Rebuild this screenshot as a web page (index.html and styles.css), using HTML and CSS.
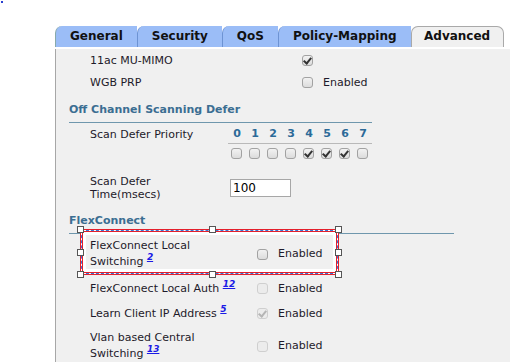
FILE: index.html
```html
<!DOCTYPE html>
<html>
<head>
    <title>WLAN Advanced</title>
    <link rel="stylesheet" href="styles.css">
</head>
<body>
    <div class="mark"></div>
    <div class="panel">
        <ul class="tabs">
            <li>General</li>
            <li>Security</li>
            <li>QoS</li>
            <li>Policy-Mapping</li>
            <li class="active">Advanced</li>
        </ul>
        <div class="content">
            <div class="row row-top">
                <div class="label">11ac MU-MIMO</div>
                <div class="value"><span class="cb checked"></span></div>
            </div>
            <div class="row row-top">
                <div class="label">WGB PRP</div>
                <div class="value"><span class="cb"></span><span class="txt">Enabled</span></div>
            </div>

            <h3 class="heading short">Off Channel Scanning Defer</h3>
            <div class="row row-prio">
                <div class="label">Scan Defer Priority</div>
                <div class="prio">
                    <div class="nums">
                        <span>0</span><span>1</span><span>2</span><span>3</span>
                        <span>4</span><span>5</span><span>6</span><span>7</span>
                    </div>
                    <div class="boxes">
                        <span><i class="cb"></i></span><span><i class="cb"></i></span>
                        <span><i class="cb"></i></span><span><i class="cb"></i></span>
                        <span><i class="cb checked"></i></span><span><i class="cb checked"></i></span>
                        <span><i class="cb checked"></i></span><span><i class="cb"></i></span>
                    </div>
                </div>
            </div>
            <div class="row row-time">
                <div class="label">Scan Defer<br>Time(msecs)</div>
                <div class="value"><input class="field" type="text" value="100"></div>
            </div>

            <h3 class="heading long">FlexConnect</h3>
            <div class="row row-fc row-sel">
                <div class="label">FlexConnect Local<br>Switching <a href="#">2</a></div>
                <div class="value"><span class="cb"></span><span class="txt">Enabled</span></div>
                <div class="sel">
                    <i class="h tl"></i><i class="h tm"></i><i class="h tr"></i>
                    <i class="h ml"></i><i class="h mr"></i>
                    <i class="h bl"></i><i class="h bm"></i><i class="h br"></i>
                </div>
            </div>
            <div class="row row-fc row-one">
                <div class="label">FlexConnect Local Auth <a href="#">12</a></div>
                <div class="value"><span class="cb off"></span><span class="txt">Enabled</span></div>
            </div>
            <div class="row row-fc row-one">
                <div class="label">Learn Client IP Address <a href="#">5</a></div>
                <div class="value"><span class="cb off checked"></span><span class="txt">Enabled</span></div>
            </div>
            <div class="row row-fc row-two">
                <div class="label">Vlan based Central<br>Switching <a href="#">13</a></div>
                <div class="value"><span class="cb off"></span><span class="txt">Enabled</span></div>
            </div>
        </div>
    </div>
</body>
</html>
```

FILE: styles.css
```css
body {
    margin: 0;
    background: #fff;
    font-family: "DejaVu Sans", Verdana, sans-serif;
    font-size: 11px;
    color: #1e1a2a;
    height: 362px;
    overflow: hidden;
}

.mark {
    width: 2px;
    height: 2px;
    margin: 1px 0 0 1px;
    background: #2a3fd0;
}

.panel {
    margin: 23px 0 0 55px;
    width: 455px;
}

/* Вкладки */
.tabs {
    display: flex;
    list-style: none;
    margin: 0;
    padding: 0;
    height: 21px;
}

.tabs li {
    flex-shrink: 0;
    white-space: nowrap;
    height: 21px;
    line-height: 21px;
    padding: 0 14px;
    font-size: 12px;
    font-weight: bold;
    color: #111;
    background: #9bbdf7;
    border-left: 1px solid #6d93d3;
    border-top-left-radius: 7px;
    box-sizing: border-box;
}

.tabs li:first-child {
    border-left: 1px solid #8aa;
}

.tabs li.active {
    width: 93px;
    padding: 0;
    text-align: center;
    background: #f0f0f0;
    border: 1px solid #a9a9a9;
    border-bottom: none;
    border-top-right-radius: 7px;
    line-height: 19px;
}

.content {
    background: #f0f0f0;
    border-left: 1px solid #a7a7a7;
    height: 320px;
}

.row {
    display: grid;
    padding-left: 34px;
    align-items: center;
}

.row-top {
    grid-template-columns: 212px auto;
    height: 22px;
}

.row-top:first-child {
    margin-top: 2px;
}

.value {
    display: flex;
    align-items: center;
}

.txt {
    margin-left: 10px;
}

.heading {
    margin: 5px 0 0 13px;
    padding: 5px 0 6px;
    font-size: 11px;
    line-height: 13px;
    font-weight: bold;
    color: #3b6e92;
    border-bottom: 1px solid #6f97ad;
}

.heading.short {
    width: 303px;
}

.heading.long {
    width: 385px;
    margin-top: 8px;
}

/* Чекбоксы */
.cb {
    display: inline-block;
    width: 9px;
    height: 9px;
    border: 1px solid #a2a2a2;
    border-radius: 3px;
    background: linear-gradient(#f2f2f2, #dcdcdc);
    position: relative;
}

.cb.checked::after {
    content: "";
    position: absolute;
    left: 2px;
    top: 0;
    width: 3px;
    height: 6px;
    border: solid #333;
    border-width: 0 2px 2px 0;
    transform: rotate(40deg);
}

.cb.off {
    border-color: #cfcfcf;
    background: #ececec;
}

.cb.off.checked::after {
    border-color: #b5b5b5;
}

.row-prio {
    grid-template-columns: 138px auto;
    align-items: start;
    margin-top: 2px;
}

.row-prio .label {
    line-height: 20px;
}

.nums, .boxes {
    display: flex;
}

.nums {
    width: 144px;
    border-bottom: 1px solid #b9b9b9;
}

.nums span, .boxes span {
    width: 18px;
    text-align: center;
}

.nums span {
    font-weight: bold;
    color: #2c6a98;
    line-height: 18px;
    font-size: 11px;
}

.boxes {
    padding-top: 4px;
    height: 11px;
}

.boxes span {
    text-align: left;
    padding-left: 3px;
    box-sizing: border-box;
}

.row-time {
    grid-template-columns: 140px auto;
    margin-top: 16px;
    line-height: 13px;
}

.field {
    width: 61px;
    height: 18px;
    box-sizing: border-box;
    border: 1px solid #a7a7a7;
    font-family: inherit;
    font-size: 12px;
    padding: 0 2px;
    margin: 0;
}

.row-fc {
    grid-template-columns: 167px auto;
    line-height: 16px;
}

.row-fc a {
    color: #1a1ae6;
    font-size: 9px;
    font-weight: bold;
    font-style: italic;
    vertical-align: 5px;
    line-height: 0;
}

.row-sel {
    position: relative;
    height: 36px;
    margin: 2px 0 4px;
}

.row-one {
    height: 25px;
}

.row-two {
    height: 40px;
}

/* Рамка выделения */
.sel {
    position: absolute;
    left: 24px;
    top: -7px;
    width: 253px;
    height: 40px;
    border: 3px solid #e41f2b;
    box-shadow: inset 0 0 0 3px #fff;
}

.sel::before {
    content: "";
    position: absolute;
    inset: -2px;
    border: 1px solid #fff;
}

.sel::after {
    content: "";
    position: absolute;
    inset: -2px;
    border: 1px dashed #3a76d6;
}

.h {
    position: absolute;
    width: 5px;
    height: 5px;
    background: #fff;
    border: 1px solid #555;
    z-index: 2;
}

.h.tl, .h.ml, .h.bl { left: -6px; }
.h.tr, .h.mr, .h.br { right: -6px; }
.h.tm, .h.bm { left: 126px; }
.h.tl, .h.tm, .h.tr { top: -6px; }
.h.bl, .h.bm, .h.br { bottom: -6px; }
.h.ml, .h.mr { top: 17px; }
```
